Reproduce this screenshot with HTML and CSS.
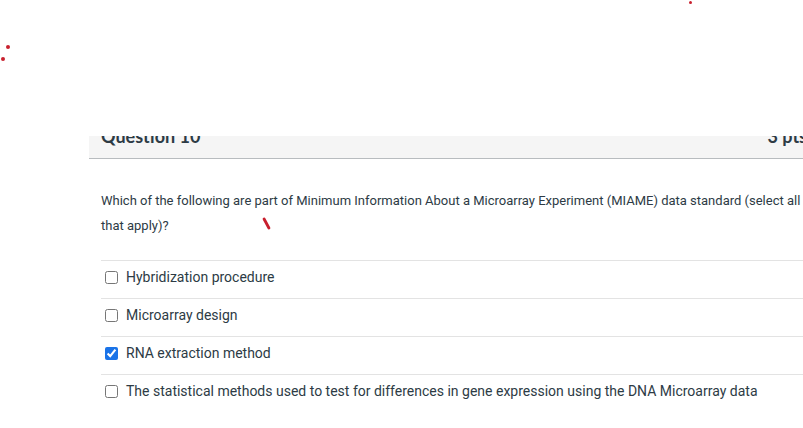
FILE: index.html
```html
<!DOCTYPE html>
<html lang="en">
<head>
<meta charset="utf-8">
<title>Question 10</title>
<link rel="stylesheet" href="styles.css">
</head>
<body>
<div class="top">
  <span class="mark dot d1"></span>
  <span class="mark dot d2"></span>
  <span class="mark dot d3"></span>
</div>
<div class="question">
  <div class="q-header">
    <span class="q-title">Question 10</span>
    <span class="q-points">3 pts</span>
  </div>
  <div class="q-body">
    <p class="q-text">Which of the following are part of Minimum Information About a Microarray Experiment (MIAME) data standard (select all that apply)?<span class="mark slash"></span></p>
    <div class="answers">
      <label class="answer"><input type="checkbox"><span>Hybridization procedure</span></label>
      <label class="answer"><input type="checkbox"><span>Microarray design</span></label>
      <label class="answer"><input type="checkbox" checked><span>RNA extraction method</span></label>
      <label class="answer"><input type="checkbox"><span>The statistical methods used to test for differences in gene expression using the DNA Microarray data</span></label>
    </div>
  </div>
</div>
</body>
</html>
```
FILE: styles.css
```css
html, body {
  margin: 0;
  padding: 0;
  background: #ffffff;
  overflow: hidden;
}
body {
  width: 803px;
  height: 428px;
  font-family: Roboto, "Liberation Sans", sans-serif;
  color: #2d3b45;
}
.top {
  position: relative;
  height: 136px;
}
.mark {
  position: absolute;
  background: #c8202e;
}
.dot {
  width: 4px;
  height: 4px;
  border-radius: 50%;
}
.d1 { left: 6px; top: 45px; }
.d2 { left: 1px; top: 57px; }
.d3 { left: 689px; top: 1px; width: 3px; height: 3px; }
.slash {
  left: 164px;
  top: 29px;
  width: 3px;
  height: 13px;
  border-radius: 2px;
  transform: rotate(-28deg);
}
.question {
  margin-left: 89px;
  width: 730px;
}
.q-header {
  height: 22px;
  overflow: hidden;
  background: #f5f5f5;
  border-bottom: 1px solid #b8bcbf;
  display: flex;
  justify-content: space-between;
  align-items: flex-start;
  padding: 0 12px;
}
.q-title, .q-points {
  margin-top: -10px;
  font-family: Lato, Roboto, sans-serif;
  font-weight: 700;
  font-size: 18px;
  line-height: 20px;
  color: #2d3b45;
  white-space: nowrap;
}
.q-body {
  padding: 29px 0 0 12px;
}
.q-text {
  position: relative;
  margin: 0;
  width: 716px;
  font-size: 13px;
  line-height: 25px;
}
.answers {
  margin-top: 22px;
}
.answer {
  display: flex;
  align-items: center;
  gap: 5px;
  border-top: 1px solid #e3e3e3;
  padding: 6px 0 11px 0;
  font-size: 14px;
  line-height: 20px;
  white-space: nowrap;
}
.answer input {
  margin: 3px 3px 3px 4px;
  width: 13px;
  height: 13px;
  accent-color: #1a73e8;
}
```
